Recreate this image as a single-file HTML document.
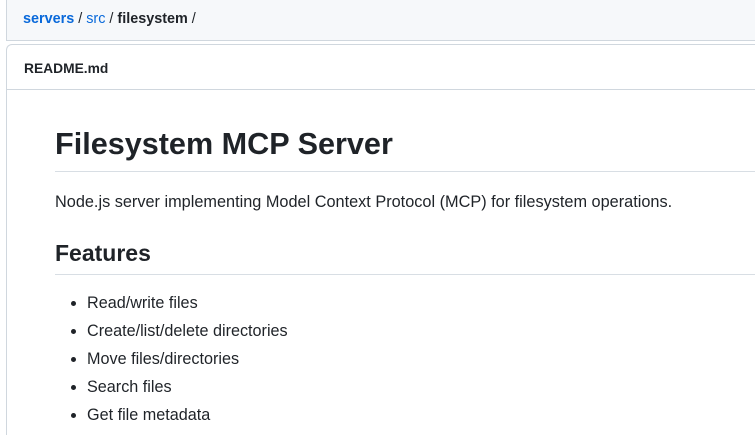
<!DOCTYPE html>
<html><head><style>
html,body{margin:0;width:755px;height:435px;overflow:hidden}
body{background:#fff;font-family:"Liberation Sans",Arial,sans-serif;color:#1f2328;position:relative}
.top{position:absolute;left:6px;top:0;width:748px;height:40px;background:#f6f8fa;border-left:1px solid #d0d7de;border-bottom:1px solid #d0d7de}
.crumb{position:absolute;left:23px;top:11px;font-size:14.4px}
.crumb a{color:#0969da;text-decoration:none}
.crumb b{font-weight:600}
.card{position:absolute;left:6px;top:44px;width:760px;height:395px;border:1px solid #d0d7de;border-bottom:none;border-right:none;border-radius:6px 0 0 0}
.hdr{height:44px;border-bottom:1px solid #d0d7de}
.hdr span{position:absolute;left:17px;top:16px;font-size:13.8px;font-weight:bold}
h1{position:absolute;left:55px;top:125px;margin:0;font-size:30.6px;font-weight:bold;line-height:38px}
.l1{position:absolute;left:55px;top:171px;width:700px;height:1px;background:#d8dee4}
p{position:absolute;left:55px;top:192px;margin:0;font-size:16.3px;line-height:20px;white-space:nowrap}
h2{position:absolute;left:55px;top:238px;margin:0;font-size:23px;font-weight:bold;line-height:30px}
.l2{position:absolute;left:55px;top:274px;width:700px;height:1px;background:#d8dee4}
ul{position:absolute;left:55px;top:293px;margin:0;padding-left:32px;font-size:16.2px;line-height:20px}
li{margin-bottom:8px}
</style></head><body>
<div class="top"></div>
<div class="crumb"><a><b>servers</b></a> / <a>src</a> / <b>filesystem</b> /</div>
<div class="card"><div class="hdr"><span>README.md</span></div></div>
<h1>Filesystem MCP Server</h1><div class="l1"></div>
<p>Node.js server implementing Model Context Protocol (MCP) for filesystem operations.</p>
<h2>Features</h2><div class="l2"></div>
<ul><li>Read/write files</li><li>Create/list/delete directories</li><li>Move files/directories</li><li>Search files</li><li>Get file metadata</li></ul>
</body></html>
